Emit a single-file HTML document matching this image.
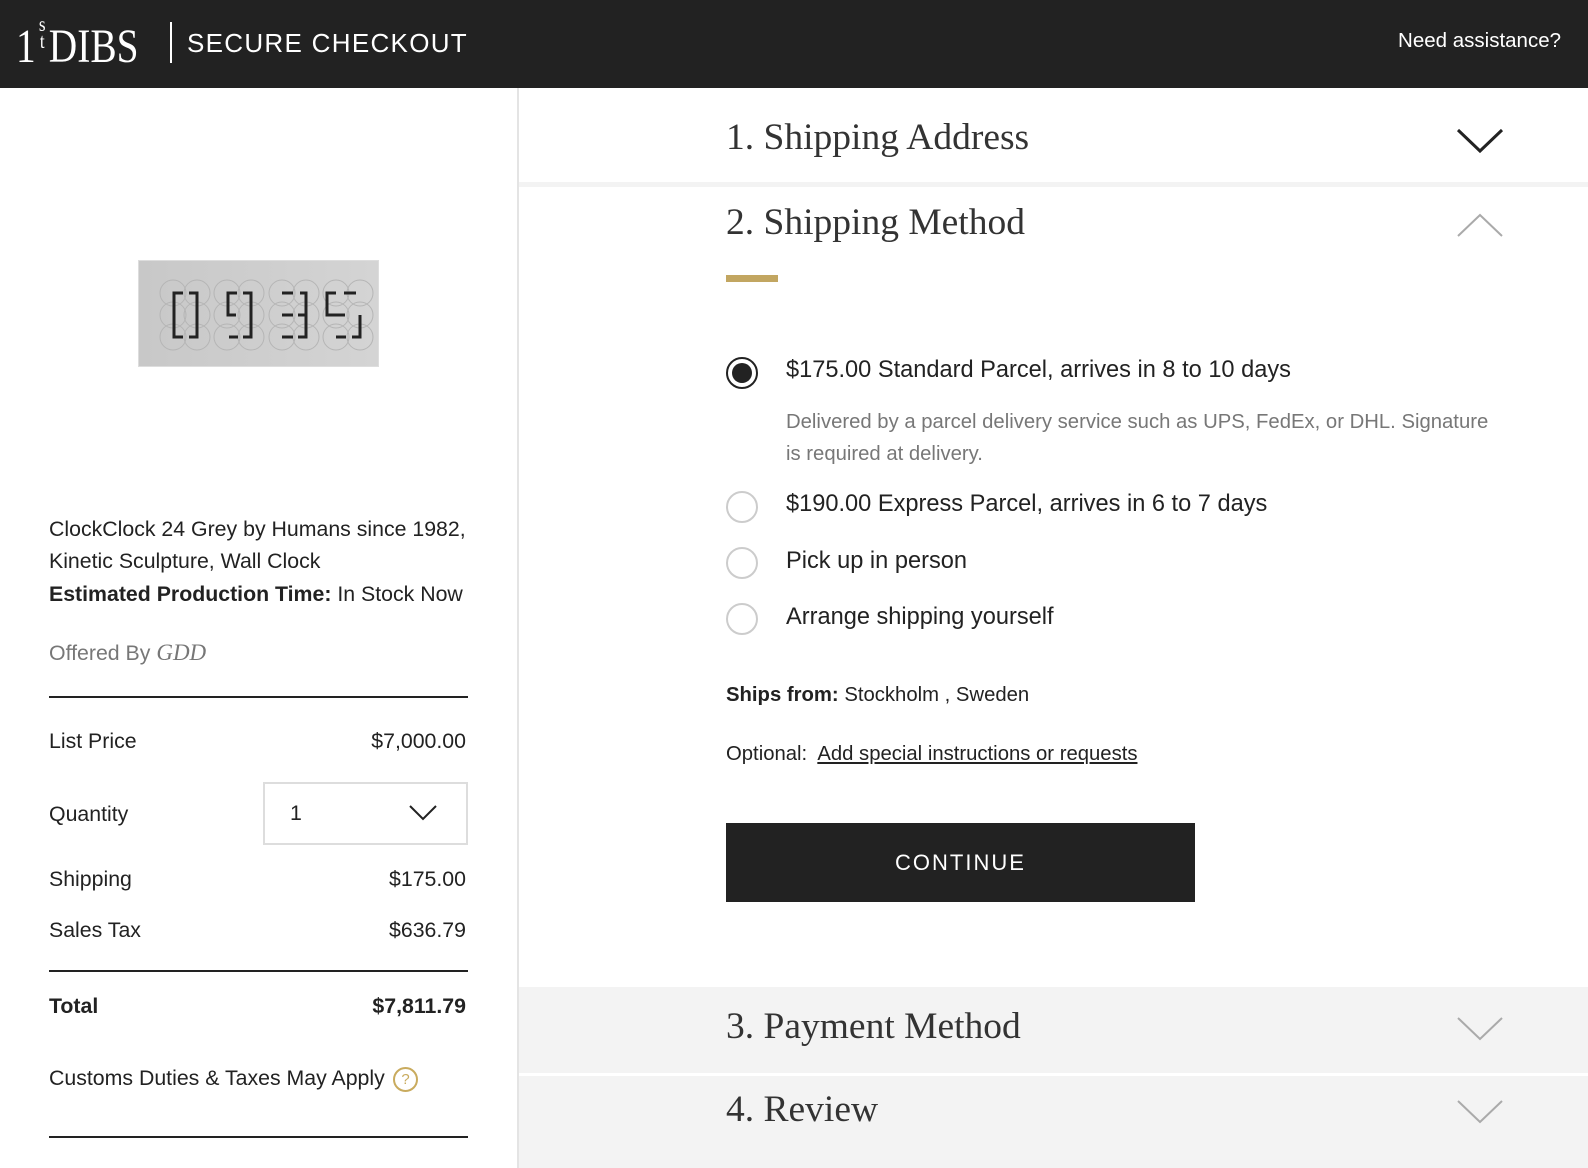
<!DOCTYPE html>
<html><head><style>
*{margin:0;padding:0;box-sizing:border-box}
body{width:1588px;height:1168px;overflow:hidden;background:#fff;font-family:"Liberation Sans",sans-serif;color:#222;position:relative}
.a{position:absolute}
.hdr{left:0;top:0;width:1588px;height:88px;background:#222}
.serif{font-family:"Liberation Serif",serif}
.h{font-family:"Liberation Serif",serif;font-size:37.5px;color:#333;left:726px}
.t{font-size:21.3px}
.o{font-size:23.6px}
.radio{width:32px;height:32px;border:2px solid #ccc;border-radius:50%;left:726px}
.chev{left:1456px}
</style></head><body>
<div class="a hdr"></div>
<div class="a serif" style="left:16px;top:16px;color:#fff;font-size:48px;line-height:50px;transform:scaleX(0.82);transform-origin:left;white-space:nowrap">1<span style="font-size:21px;display:inline-block;width:16px;line-height:17px;vertical-align:14px;text-align:center">s<br>t</span>DIBS</div>
<div class="a" style="left:170px;top:22px;width:2px;height:41px;background:#fff"></div>
<div class="a" style="left:187px;top:28px;color:#fff;font-size:26px;letter-spacing:1.3px">SECURE CHECKOUT</div>
<div class="a" style="right:27px;top:29px;color:#fff;font-size:20.5px">Need assistance?</div>

<div class="a" style="left:517px;top:88px;width:2px;height:1080px;background:#e4e4e4"></div>

<div class="a" style="left:138px;top:260px;width:241px;height:107px;background:linear-gradient(90deg,#c8c8c8,#d4d4d4);border:1px solid #ddd"></div>
<svg class="a" style="left:138px;top:260px" width="241" height="107">
<g fill="none" stroke="#b5b5b5" stroke-width="1">
<circle cx="35" cy="33" r="13"/><circle cx="59" cy="33" r="13"/><circle cx="89" cy="33" r="13"/><circle cx="113" cy="33" r="13"/><circle cx="144" cy="33" r="13"/><circle cx="168" cy="33" r="13"/><circle cx="198" cy="33" r="13"/><circle cx="222" cy="33" r="13"/>
<circle cx="35" cy="55" r="13"/><circle cx="59" cy="55" r="13"/><circle cx="89" cy="55" r="13"/><circle cx="113" cy="55" r="13"/><circle cx="144" cy="55" r="13"/><circle cx="168" cy="55" r="13"/><circle cx="198" cy="55" r="13"/><circle cx="222" cy="55" r="13"/>
<circle cx="35" cy="77" r="13"/><circle cx="59" cy="77" r="13"/><circle cx="89" cy="77" r="13"/><circle cx="113" cy="77" r="13"/><circle cx="144" cy="77" r="13"/><circle cx="168" cy="77" r="13"/><circle cx="198" cy="77" r="13"/><circle cx="222" cy="77" r="13"/></g>
<g fill="none" stroke="#222" stroke-width="3">
<path d="M45 33H36V77h9M51 33h8v44h-8M99 33h-9v22h8M105 33h8v44h-8M100 77h-9"/>
<path d="M144 33h11M162 33h6v22h-8M168 55v22h-8M144 55h11M144 77h11M198 33h-9v22h9M206 33h12M198 55h9M222 55v22h-8M198 77h10"/>
</g></svg>

<div class="a t" style="left:49px;top:513px;line-height:32px">ClockClock 24 Grey by Humans since 1982,<br>Kinetic Sculpture, Wall Clock</div>
<div class="a t" style="left:49px;top:582px"><b>Estimated Production Time:</b> In Stock Now</div>
<div class="a t" style="left:49px;top:640px;color:#777">Offered By <i class="serif" style="font-size:23px">GDD</i></div>
<div class="a" style="left:49px;top:696px;width:419px;height:2px;background:#222"></div>
<div class="a t" style="left:49px;top:729px">List Price</div><div class="a t" style="right:1122px;top:729px">$7,000.00</div>
<div class="a t" style="left:49px;top:802px">Quantity</div>
<div class="a" style="left:263px;top:782px;width:205px;height:63px;border:2px solid #ddd"></div>
<div class="a t" style="left:290px;top:801px">1</div>
<svg class="a" style="left:409px;top:805px" width="28" height="16"><path d="M1 1l13 13L27 1" fill="none" stroke="#222" stroke-width="2"/></svg>
<div class="a t" style="left:49px;top:867px">Shipping</div><div class="a t" style="right:1122px;top:867px">$175.00</div>
<div class="a t" style="left:49px;top:918px">Sales Tax</div><div class="a t" style="right:1122px;top:918px">$636.79</div>
<div class="a" style="left:49px;top:970px;width:419px;height:2px;background:#222"></div>
<div class="a t" style="left:49px;top:994px"><b>Total</b></div><div class="a t" style="right:1122px;top:994px"><b>$7,811.79</b></div>
<div class="a t" style="left:49px;top:1066px">Customs Duties &amp; Taxes May Apply</div>
<div class="a" style="left:393px;top:1067px;width:25px;height:25px;border:2px solid #c9ab5e;border-radius:50%;color:#c9ab5e;font-size:15px;text-align:center;line-height:21px">?</div>
<div class="a" style="left:49px;top:1136px;width:419px;height:2px;background:#222"></div>

<div class="a h" style="top:116px">1. Shipping Address</div>
<svg class="a chev" style="top:128px" width="48" height="26"><path d="M2 2l22 21L46 2" fill="none" stroke="#222" stroke-width="3"/></svg>
<div class="a" style="left:519px;top:182px;width:1069px;height:5px;background:#f3f3f3"></div>
<div class="a h" style="top:201px">2. Shipping Method</div>
<svg class="a chev" style="top:213px" width="48" height="26"><path d="M2 23L24 2l22 21" fill="none" stroke="#aaa" stroke-width="2"/></svg>
<div class="a" style="left:726px;top:275px;width:52px;height:7px;background:#c2a661"></div>

<div class="a radio" style="top:357px;border-color:#222"><div style="margin:4px;width:20px;height:20px;border-radius:50%;background:#222"></div></div>
<div class="a o" style="left:786px;top:357px">$175.00 Standard Parcel, arrives in 8 to 10 days</div>
<div class="a" style="left:786px;top:406px;font-size:20.3px;color:#777;line-height:32px">Delivered by a parcel delivery service such as UPS, FedEx, or DHL. Signature<br>is required at delivery.</div>
<div class="a radio" style="top:491px"></div>
<div class="a o" style="left:786px;top:491px">$190.00 Express Parcel, arrives in 6 to 7 days</div>
<div class="a radio" style="top:547px"></div>
<div class="a o" style="left:786px;top:548px">Pick up in person</div>
<div class="a radio" style="top:603px"></div>
<div class="a o" style="left:786px;top:604px">Arrange shipping yourself</div>
<div class="a" style="left:726px;top:684px;font-size:20.3px"><b>Ships from:</b> Stockholm , Sweden</div>
<div class="a" style="left:726px;top:743px;font-size:20.3px">Optional:&nbsp; <u>Add special instructions or requests</u></div>
<div class="a" style="left:726px;top:823px;width:469px;height:79px;background:#222;color:#fff;font-size:22px;letter-spacing:2px;text-align:center;line-height:79px">CONTINUE</div>

<div class="a" style="left:519px;top:987px;width:1069px;height:181px;background:#f3f3f3"></div>
<div class="a" style="left:519px;top:1073px;width:1069px;height:3px;background:#fff"></div>
<div class="a h" style="top:1005px">3. Payment Method</div>
<svg class="a chev" style="top:1016px" width="48" height="26"><path d="M2 2l22 21L46 2" fill="none" stroke="#aaa" stroke-width="2"/></svg>
<div class="a h" style="top:1088px">4. Review</div>
<svg class="a chev" style="top:1099px" width="48" height="26"><path d="M2 2l22 21L46 2" fill="none" stroke="#aaa" stroke-width="2"/></svg>
</body></html>
